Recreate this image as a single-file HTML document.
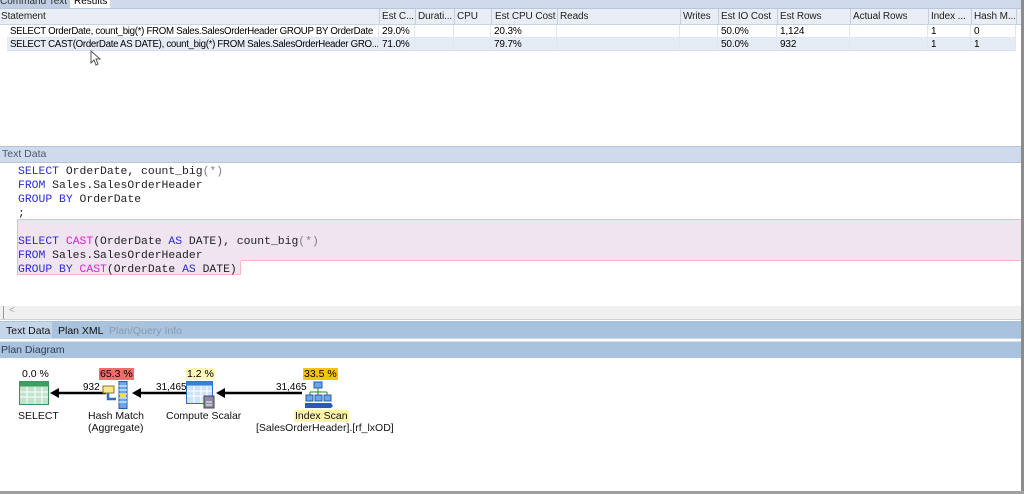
<!DOCTYPE html>
<html><head><meta charset="utf-8"><style>
*{margin:0;padding:0;box-sizing:border-box}
body{width:1024px;height:494px;overflow:hidden;background:#fff;font-family:"Liberation Sans",sans-serif;font-size:10.5px;color:#000;position:relative}
.a{position:absolute}
.tabs{left:0;top:0;width:1021px;height:8px;background:#cfdbec}
.hdr{left:0;top:8px;width:1021px;height:17px;background:#e9eef6;border-top:1px solid #b8c6da;border-bottom:1px solid #c8d3e3}
.hc{position:absolute;top:2px;white-space:nowrap;overflow:hidden;color:#1e1e1e;font-size:10px;letter-spacing:-0.1px}
.row{left:7px;width:1009px;height:13px;font-size:10px;letter-spacing:-0.15px}
.cell{position:absolute;top:0;height:13px;border-right:1px solid #dfe6f0;white-space:nowrap;overflow:hidden;text-overflow:ellipsis;padding-left:3px;line-height:13px}
.st{letter-spacing:-0.3px;font-size:9.7px;text-overflow:clip}
.vl{position:absolute;top:9px;width:1px;height:15px;background:#c5cfdc}
.bar{background:#cfdbec;border-top:1px solid #b3c3da;border-bottom:1px solid #b9c5d6;color:#4a5a70;padding-left:2px;font-size:10.5px}
.code{font-family:"Liberation Mono",monospace;font-size:11.4px;line-height:14px;left:18px;white-space:pre;color:#222}
.k{color:#2b2bd8}.f{color:#e020d0}.g{color:#808080}
.lbl{font-size:10.5px;text-align:center;white-space:nowrap;color:#111}
</style></head><body>
<div class="a tabs"></div>
<div class="a" style="left:0;top:0;width:70px;height:8px;background:#c0cee4;font-size:10px;line-height:4px;overflow:hidden;color:#333">Command Text</div>
<div class="a" style="left:70px;top:0;width:40px;height:9px;background:#fff;font-size:10px;line-height:4px;overflow:hidden;padding-left:4px">Results</div>
<div class="a hdr"></div>
<div class="hc" style="left:1px;top:11px">Statement</div>
<div class="hc" style="left:382px;top:11px;width:32px">Est C...</div>
<div class="hc" style="left:418px;top:11px;width:35px">Durati...</div>
<div class="hc" style="left:457px;top:11px">CPU</div>
<div class="hc" style="left:495px;top:11px;width:61px">Est CPU Cost</div>
<div class="hc" style="left:560px;top:11px">Reads</div>
<div class="hc" style="left:683px;top:11px">Writes</div>
<div class="hc" style="left:721px;top:11px;width:55px">Est IO Cost</div>
<div class="hc" style="left:780px;top:11px">Est Rows</div>
<div class="hc" style="left:853px;top:11px">Actual Rows</div>
<div class="hc" style="left:931px;top:11px;width:39px">Index ...</div>
<div class="hc" style="left:974px;top:11px;width:41px">Hash M...</div>
<div class="vl" style="left:379px"></div><div class="vl" style="left:415px"></div><div class="vl" style="left:454px"></div><div class="vl" style="left:491px"></div><div class="vl" style="left:557px"></div><div class="vl" style="left:680px"></div><div class="vl" style="left:718px"></div><div class="vl" style="left:777px"></div><div class="vl" style="left:850px"></div><div class="vl" style="left:928px"></div><div class="vl" style="left:971px"></div><div class="vl" style="left:1016px"></div>

<div class="a row" style="top:25px;background:#fff;border-bottom:1px solid #dfe6f0">
<div class="cell st" style="left:0;width:372px">SELECT OrderDate, count_big(*) FROM Sales.SalesOrderHeader GROUP BY OrderDate</div>
<div class="cell" style="left:372px;width:36px">29.0%</div><div class="cell" style="left:408px;width:39px"></div><div class="cell" style="left:447px;width:37px"></div>
<div class="cell" style="left:484px;width:66px">20.3%</div><div class="cell" style="left:550px;width:123px"></div><div class="cell" style="left:673px;width:38px"></div>
<div class="cell" style="left:711px;width:59px">50.0%</div><div class="cell" style="left:770px;width:73px">1,124</div><div class="cell" style="left:843px;width:78px"></div>
<div class="cell" style="left:921px;width:43px">1</div><div class="cell" style="left:964px;width:45px">0</div></div>
<div class="a row" style="top:38px;background:#e5ecf6;border-bottom:1px solid #d5deea">
<div class="cell st" style="left:0;width:372px">SELECT CAST(OrderDate AS DATE), count_big(*) FROM Sales.SalesOrderHeader GRO...</div>
<div class="cell" style="left:372px;width:36px">71.0%</div><div class="cell" style="left:408px;width:39px"></div><div class="cell" style="left:447px;width:37px"></div>
<div class="cell" style="left:484px;width:66px">79.7%</div><div class="cell" style="left:550px;width:123px"></div><div class="cell" style="left:673px;width:38px"></div>
<div class="cell" style="left:711px;width:59px">50.0%</div><div class="cell" style="left:770px;width:73px">932</div><div class="cell" style="left:843px;width:78px"></div>
<div class="cell" style="left:921px;width:43px">1</div><div class="cell" style="left:964px;width:45px">1</div></div>
<svg class="a" style="left:90px;top:50px" width="12" height="16"><path d="M1 1 L1 13 L4 10 L6 15 L8 14 L6 9 L10 9 Z" fill="#fff" stroke="#555" stroke-width="1"/></svg>

<div class="a bar" style="left:0;top:146px;width:1021px;height:17px;line-height:15px">Text Data</div>
<div class="a" style="left:17px;top:219px;width:1004px;height:42px;background:#efe4ef;border-top:1px solid #f4b8c0"></div>
<div class="a" style="left:17px;top:261px;width:224px;height:14px;background:#efe4ef;border-bottom:1px solid #f4b8c0;border-right:1px solid #f4b8c0"></div>
<div class="a" style="left:241px;top:260px;width:780px;height:1px;background:#f4b8c0"></div>
<div class="a" style="left:17px;top:219px;width:1px;height:56px;background:#f4b8c0"></div>
<div class="a code" style="top:165px"><span class="k">SELECT</span> OrderDate, count_big<span class="g">(*)</span>
<span class="k">FROM</span> Sales.SalesOrderHeader
<span class="k">GROUP BY</span> OrderDate
;

<span class="k">SELECT</span> <span class="f">CAST</span>(OrderDate <span class="k">AS</span> DATE), count_big<span class="g">(*)</span>
<span class="k">FROM</span> Sales.SalesOrderHeader
<span class="k">GROUP BY</span> <span class="f">CAST</span>(OrderDate <span class="k">AS</span> DATE)</div>

<div class="a" style="left:0;top:306px;width:1021px;height:14px;background:#f0f0f0;border-bottom:1px solid #d0d0d0"></div>
<div class="a" style="left:3px;top:306px;width:1px;height:13px;background:#999"></div>
<div class="a" style="left:9px;top:305px;font-size:10px;color:#aaa">&lt;</div>
<div class="a" style="left:0;top:321px;width:1021px;height:18px;background:#a9c2dd;border-bottom:1px solid #c8d6e8"></div>
<div class="a" style="left:0;top:322px;width:52px;height:17px;background:#c5d6ea"></div>
<div class="a" style="left:6px;top:325px;color:#111">Text Data</div>
<div class="a" style="left:58px;top:325px;color:#111">Plan XML</div>
<div class="a" style="left:109px;top:325px;color:#8a9ab0">Plan/Query Info</div>
<div class="a" style="left:0;top:341px;width:1021px;height:17px;background:#a9c2dd;border-top:1px solid #d8e2ee;color:#2d3e55;padding-left:1px;line-height:16px">Plan Diagram</div>

<div class="a" style="left:22px;top:368px">0.0 %</div>
<svg class="a" style="left:19px;top:381px" width="30" height="24"><rect x="0.5" y="0.5" width="29" height="23" fill="#bfe3cb" stroke="#3f8d5a"/><rect x="0.5" y="0.5" width="29" height="5" fill="#3f9d62"/><path d="M1 11H29M1 16H29M8 6V23M16 6V23M23 6V23" stroke="#fff" stroke-width="1"/></svg>
<div class="a lbl" style="left:18px;top:410px">SELECT</div>

<svg class="a" style="left:48px;top:386px" width="60" height="14"><line x1="10" y1="7" x2="58" y2="7" stroke="#000" stroke-width="2.5"/><path d="M2 7L11 2V12Z" fill="#000"/></svg>
<div class="a" style="left:83px;top:382px;font-size:10px">932</div>
<div class="a" style="left:99px;top:368px;background:#f26c6c;padding:0 1px">65.3 %</div>
<svg class="a" style="left:102px;top:381px" width="30" height="28"><rect x="1" y="5" width="11" height="7" fill="#f8e88a" stroke="#8a7a20"/><path d="M6 12V18H14" stroke="#2a6fc8" stroke-width="2.5" fill="none"/><rect x="17" y="0.5" width="8" height="27" fill="#6aa6e8" stroke="#2a5aa8"/><path d="M17 5H25M17 9H25M17 13H25M17 17H25M17 21H25" stroke="#fff"/><rect x="18" y="13" width="6" height="4" fill="#f0e040"/></svg>
<div class="a lbl" style="left:88px;top:410px">Hash Match</div>
<div class="a lbl" style="left:88px;top:422px">(Aggregate)</div>

<svg class="a" style="left:130px;top:386px" width="60" height="14"><line x1="10" y1="7" x2="58" y2="7" stroke="#000" stroke-width="2.5"/><path d="M2 7L11 2V12Z" fill="#000"/></svg>
<div class="a" style="left:156px;top:382px;font-size:10px">31,465</div>
<div class="a" style="left:186px;top:368px;background:#fdf7b8;padding:0 1px">1.2 %</div>
<svg class="a" style="left:186px;top:381px" width="30" height="28"><rect x="0.5" y="0.5" width="26" height="22" fill="#cfe2f7" stroke="#2a6fc8"/><rect x="0.5" y="0.5" width="26" height="4" fill="#3a7fd8"/><path d="M1 10H26M1 15H26M8 5V22M15 5V22M21 5V22" stroke="#fff"/><rect x="18" y="15" width="10" height="12" fill="#8a8aa8" stroke="#444"/><path d="M20 21h6M20 24h6" stroke="#fff"/></svg>
<div class="a lbl" style="left:166px;top:410px">Compute Scalar</div>

<svg class="a" style="left:214px;top:386px" width="90" height="14"><line x1="10" y1="7" x2="88" y2="7" stroke="#000" stroke-width="2.5"/><path d="M2 7L11 2V12Z" fill="#000"/></svg>
<div class="a" style="left:276px;top:382px;font-size:10px">31,465</div>
<div class="a" style="left:303px;top:368px;background:#f7c400;padding:0 1px">33.5 %</div>
<svg class="a" style="left:304px;top:381px" width="30" height="28"><rect x="10" y="1" width="8" height="6" fill="#6aa6e8" stroke="#2a5aa8"/><path d="M14 7V11M6 11H23M6 11V14M14 11V14M23 11V14" stroke="#2a8a2a"/><rect x="2" y="14" width="7" height="6" fill="#6aa6e8" stroke="#2a5aa8"/><rect x="11" y="14" width="7" height="6" fill="#6aa6e8" stroke="#2a5aa8"/><rect x="20" y="14" width="7" height="6" fill="#6aa6e8" stroke="#2a5aa8"/><path d="M1 22H27L29 25L27 27H1Z" fill="#2a5ab8"/></svg>
<div class="a lbl" style="left:294px;top:410px;background:#fdf7a0;padding:0 1px">Index Scan</div>
<div class="a lbl" style="left:256px;top:422px">[SalesOrderHeader].[rf_lxOD]</div>

<div class="a" style="left:1021px;top:0;width:3px;height:494px;background:#8c8c8c"></div>
<div class="a" style="left:0;top:491px;width:1024px;height:3px;background:#a0a0a0"></div>
</body></html>
